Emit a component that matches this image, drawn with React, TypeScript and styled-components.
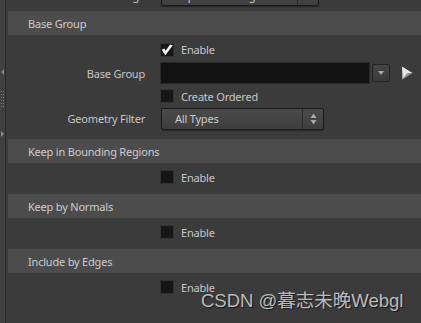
import React from 'react';
import styled, { createGlobalStyle } from 'styled-components';

const GlobalStyle = createGlobalStyle`
  html, body {
    margin: 0;
    padding: 0;
    background: #3b3b3b;
  }
`;

const Page = styled.div`
  position: relative;
  width: 421px;
  height: 323px;
  overflow: hidden;
  display: flex;
  background: #3b3b3b;
  font-family: "Noto Sans", sans-serif;
  font-size: 11px;
  letter-spacing: -0.2px;
  color: #c6c6c6;
`;

const SideStrip = styled.div`
  width: 5px;
  flex: none;
  background: #404040;
  border-right: 1px solid #2a2a2a;
  display: flex;
  flex-direction: column;
  align-items: center;
  padding-top: 68px;
`;

const SideGap = styled.div`
  width: 2px;
  flex: none;
  background: #3b3b3b;
`;

const Main = styled.div`
  flex: 1;
  display: flex;
  flex-direction: column;
`;

const Header = styled.div`
  height: 24px;
  flex: none;
  display: flex;
  align-items: center;
  padding-left: 20px;
  background: #4c4c4c;
  color: #cdcdcd;
`;

const Section = styled.div<{ $top?: number; $bottom?: number; $gap?: number }>`
  display: flex;
  flex-direction: column;
  gap: ${(p) => p.$gap ?? 1}px;
  padding-top: ${(p) => p.$top ?? 4}px;
  padding-bottom: ${(p) => p.$bottom ?? 7}px;
`;

const TopSection = styled(Section)`
  margin-top: -16px;
`;

const Row = styled.div<{ $h?: number }>`
  display: grid;
  grid-template-columns: 137px 1fr;
  column-gap: 15px;
  align-items: center;
  height: ${(p) => p.$h ?? 20}px;
`;

const Label = styled.div`
  text-align: right;
  white-space: nowrap;
`;

const Controls = styled.div`
  display: flex;
  align-items: center;
`;

const CheckBox = styled.div`
  width: 12px;
  height: 12px;
  background: #161616;
  border: 1px solid #323232;
  display: flex;
  align-items: center;
  justify-content: center;
  margin-right: 7px;
`;

const TextField = styled.div`
  width: 208px;
  height: 20px;
  background: #121212;
  border: 1px solid #2a2a2a;
`;

const MenuButton = styled.div`
  width: 16px;
  height: 16px;
  margin-left: 2px;
  border: 1px solid #242424;
  border-radius: 2px;
  background: linear-gradient(#474747, #393939);
  display: flex;
  align-items: center;
  justify-content: center;
`;

const Pointer = styled.div`
  margin-left: 11px;
  display: flex;
`;

const Dropdown = styled.div<{ $w: number; $split: number }>`
  width: ${(p) => p.$w}px;
  height: 20px;
  margin-left: 1px;
  border: 1px solid #1c1c1c;
  border-radius: 2px;
  background: linear-gradient(#4a4a4a, #3e3e3e);
  box-shadow: 0 1px 1px rgba(0, 0, 0, 0.35);
  display: grid;
  grid-template-columns: 1fr ${(p) => p.$split}px;
  align-items: stretch;
  color: #cbcbcb;
`;

const DropText = styled.div`
  padding-left: 13px;
  display: flex;
  align-items: center;
`;

const DropArrow = styled.div`
  border-left: 1px solid #2c2c2c;
  display: flex;
  align-items: center;
  justify-content: center;
`;

const Watermark = styled.div`
  position: absolute;
  left: 201px;
  top: 286px;
  font-family: "Liberation Sans", "Noto Sans CJK SC", sans-serif;
  font-size: 18.5px;
  letter-spacing: 0;
  color: rgba(215, 215, 215, 0.85);
  text-shadow: 1px 1px 1px rgba(0, 0, 0, 0.6);
  white-space: nowrap;
`;

const Check = () => (
  <svg width="12" height="12" viewBox="0 0 12 12">
    <path d="M0.8 5.8 L4.3 11.2 L11.8 1.6 L9 0.6 L4.6 6.8 L3.4 4.6 Z" fill="#f4f4f4" />
  </svg>
);

const SideIcons = () => (
  <svg width="5" height="70" viewBox="0 0 5 70">
    <path d="M1 4 L4 1 L4 7 Z" fill="#8a8a8a" />
    {[0, 1, 2, 3, 4, 5].map((r) =>
      [0, 1].map((c) => (
        <rect key={`${r}-${c}`} x={1 + c * 2} y={23 + r * 3} width="1" height="1" fill="#7a7a7a" />
      ))
    )}
    <path d="M1 63 L4 66 L1 69 Z" fill="#8a8a8a" />
  </svg>
);

const CheckRow: React.FC<{ label?: string; checked?: boolean; h?: number }> = ({
  label = 'Enable',
  checked,
  h,
}) => (
  <Row $h={h}>
    <span />
    <Controls>
      <CheckBox>{checked && <Check />}</CheckBox>
      {label}
    </Controls>
  </Row>
);

const ToggleSection: React.FC<{ title: string; bottom?: number }> = ({ title, bottom }) => (
  <>
    <Header>{title}</Header>
    <Section $bottom={bottom}>
      <CheckRow />
    </Section>
  </>
);

export default function App() {
  return (
    <Page>
      <GlobalStyle />
      <SideStrip>
        <SideIcons />
      </SideStrip>
      <SideGap />
      <Main>
        <TopSection $top={0} $bottom={5}>
          <Row $h={22}>
            <Label>Initial Merge</Label>
            <Dropdown $w={156} $split={21}>
              <DropText>Replace Existing</DropText>
              <DropArrow />
            </Dropdown>
          </Row>
        </TopSection>

        <Header>Base Group</Header>
        <Section $bottom={9}>
          <CheckRow checked h={21} />
          <Row $h={24}>
            <Label>Base Group</Label>
            <Controls>
              <TextField />
              <MenuButton>
                <svg width="8" height="6" viewBox="0 0 8 6">
                  <path d="M1 1 L7 1 L4 5 Z" fill="#a8a8a8" />
                </svg>
              </MenuButton>
              <Pointer>
                <svg width="12" height="14" viewBox="0 0 12 14">
                  <path d="M1 0.5 L11.5 7 L6 7.8 L1.5 13.5 Z" fill="#e4e4e4" />
                  <path d="M6 7.8 L1.5 13.5 L11.5 7 Z" fill="#9a9a9a" />
                </svg>
              </Pointer>
            </Controls>
          </Row>
          <CheckRow label="Create Ordered" />
          <Row $h={23}>
            <Label>Geometry Filter</Label>
            <Controls>
              <Dropdown $w={161} $split={21}>
                <DropText>All Types</DropText>
                <DropArrow>
                  <svg width="7" height="12" viewBox="0 0 7 12">
                    <path d="M3.5 0.5 L6.5 5 L0.5 5 Z" fill="#a8a8a8" />
                    <path d="M0.5 7 L6.5 7 L3.5 11.5 Z" fill="#a8a8a8" />
                  </svg>
                </DropArrow>
              </Dropdown>
            </Controls>
          </Row>
        </Section>

        <ToggleSection title="Keep in Bounding Regions" />
        <ToggleSection title="Keep by Normals" />
        <ToggleSection title="Include by Edges" bottom={30} />
      </Main>
      <Watermark>CSDN @暮志未晚Webgl</Watermark>
    </Page>
  );
}
